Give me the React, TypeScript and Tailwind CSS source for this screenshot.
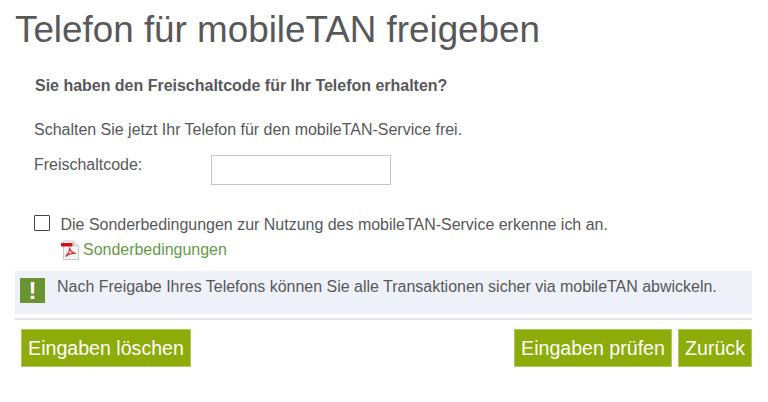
export default function App() {
  return (
    <div className="w-[768px] h-[402px] overflow-hidden bg-white text-[#58585a] font-['Liberation_Sans',Arial,sans-serif] text-[15.97px] leading-[18px] flex flex-col">
      <h1 className="text-[36.8px] leading-[42px] ml-[15px] mt-[9px]">Telefon für mobileTAN freigeben</h1>
      <p className="font-bold ml-[35px] mt-[26px]">Sie haben den Freischaltcode für Ihr Telefon erhalten?</p>
      <p className="ml-[34px] mt-[26px]">Schalten Sie jetzt Ihr Telefon für den mobileTAN-Service frei.</p>
      <div className="flex ml-[34px] mt-[16px] h-[30px]">
        <label className="w-[177px] mt-[1px]">Freischaltcode:</label>
        <input className="w-[180px] h-[30px] border border-[#c4c4c4] bg-white" />
      </div>
      <div className="flex ml-[34px] mt-[31px] items-start">
        <span className="w-[16px] h-[16px] -mt-[1px] border border-[#444444] rounded-[1px] shrink-0" />
        <span className="ml-[10.5px]">Die Sonderbedingungen zur Nutzung des mobileTAN-Service erkenne ich an.</span>
      </div>
      <a className="flex items-center ml-[61px] mt-[7px] h-[18px] text-[#659a4a]">
        <svg width="18" height="20" viewBox="0 0 18 20" className="shrink-0">
          <path d="M2.5 1h10l5 5V19.5H2.5z" fill="#f4f4f4" stroke="#c8c8c8" />
          <path d="M12.5 1v5h5" fill="#e4e4e4" stroke="#c8c8c8" />
          <rect x="0" y="3" width="11.5" height="3.5" fill="#c9151b" />
          <path d="M4.5 16.5C7 14 9 10 8.3 7.5 9 10.5 11 13 15 13.5 11 13 7 14 4.5 16.5z" fill="none" stroke="#d8343a" strokeWidth="1.2" />
        </svg>
        <span className="ml-[4px]">Sonderbedingungen</span>
      </a>
      <div className="flex items-start ml-[15px] mt-[12px] w-[737px] h-[43px] bg-[#eef1f8]">
        <div className="w-[25px] h-[25px] ml-[5px] mt-[7px] bg-[#6a9331] text-white font-bold text-[24px] leading-[25px] text-center shrink-0">!</div>
        <p className="ml-[12px] mt-[7px]">Nach Freigabe Ihres Telefons können Sie alle Transaktionen sicher via mobileTAN abwickeln.</p>
      </div>
      <div className="ml-[15px] mt-[4px] w-[737px] h-[2px] bg-[#e3e3e3]" />
      <div className="flex ml-[21px] mt-[9px] w-[731px] gap-[6px] text-[19.6px] text-white">
        <button className="h-[38px] w-[170px] bg-[#8dab09] border border-[#b3c85a] text-center">Eingaben löschen</button>
        <button className="h-[38px] w-[158px] ml-auto bg-[#8dab09] border border-[#b3c85a] text-center">Eingaben prüfen</button>
        <button className="h-[38px] w-[74px] bg-[#8dab09] border border-[#b3c85a] text-center">Zurück</button>
      </div>
    </div>
  );
}
